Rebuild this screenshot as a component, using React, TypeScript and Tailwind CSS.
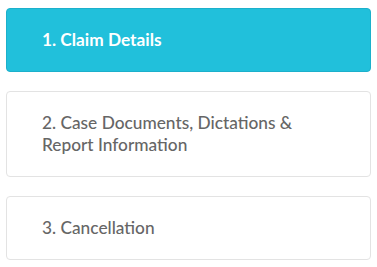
import React from 'react';

const steps = [
  { label: '1. Claim Details', active: true },
  { label: '2. Case Documents, Dictations & Report Information', active: false },
  { label: '3. Cancellation', active: false },
];

const App: React.FC = () => {
  return (
    <div className="min-h-screen bg-white px-[6px] pt-[8px]" style={{ fontFamily: 'Lato, "Open Sans", sans-serif' }}>
      <div className="flex w-[365px] flex-col gap-[19px]">
        {steps.map((step) => (
          <div
            key={step.label}
            className={`rounded-[4px] border py-[20px] pl-[35px] pr-[30px] text-[17.3px] leading-[22px] ${
              step.active
                ? 'border-[#1cb0cb] bg-[#21c0db] font-bold text-white'
                : 'border-[#e3e3e3] bg-white font-medium text-[#666666]'
            }`}
          >
            {step.label}
          </div>
        ))}
      </div>
    </div>
  );
};

export default App;
